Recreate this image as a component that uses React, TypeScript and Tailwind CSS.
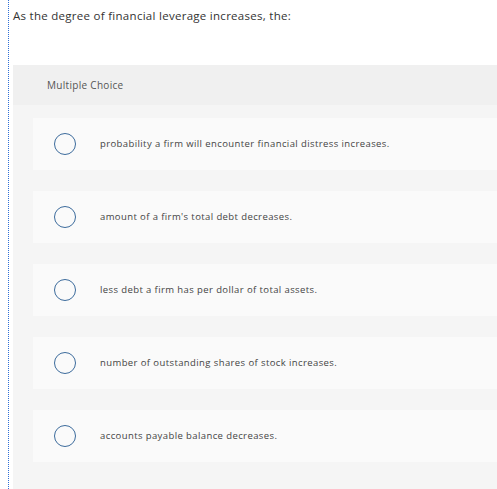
import React from "react";

const options = [
  "probability a firm will encounter financial distress increases.",
  "amount of a firm's total debt decreases.",
  "less debt a firm has per dollar of total assets.",
  "number of outstanding shares of stock increases.",
  "accounts payable balance decreases.",
];

export default function App() {
  return (
    <div
      className="w-[497px] h-[489px] bg-white overflow-hidden pl-2"
      style={{ fontFamily: "'Open Sans', Arial, sans-serif" }}
    >
      <div className="h-full border-l border-dotted border-[#2f6fd6] pl-[4px] flex flex-col">
        <div className="h-[65px] pt-[8px] text-[11.5px] tracking-[0.28px] text-[#333333] leading-[15px]">
          As the degree of financial leverage increases, the:
        </div>
        <div className="h-[40px] bg-[#f0f0f0] flex items-center pl-[34px] text-[10px] tracking-[0.3px] text-[#555555]">
          Multiple Choice
        </div>
        <div className="flex-1 bg-[#f5f5f5] pt-[13px] pl-[20px] flex flex-col gap-[21px]">
          {options.map((o) => (
            <div
              key={o}
              className="h-[52px] bg-[#fafafa] flex items-center pl-[21px]"
            >
              <div className="w-[22px] h-[22px] rounded-full border-[1.5px] border-[#3c6b9c] shrink-0" />
              <div className="ml-[24px] text-[9.5px] tracking-[0.4px] text-[#444444]">{o}</div>
            </div>
          ))}
        </div>
      </div>
    </div>
  );
}
